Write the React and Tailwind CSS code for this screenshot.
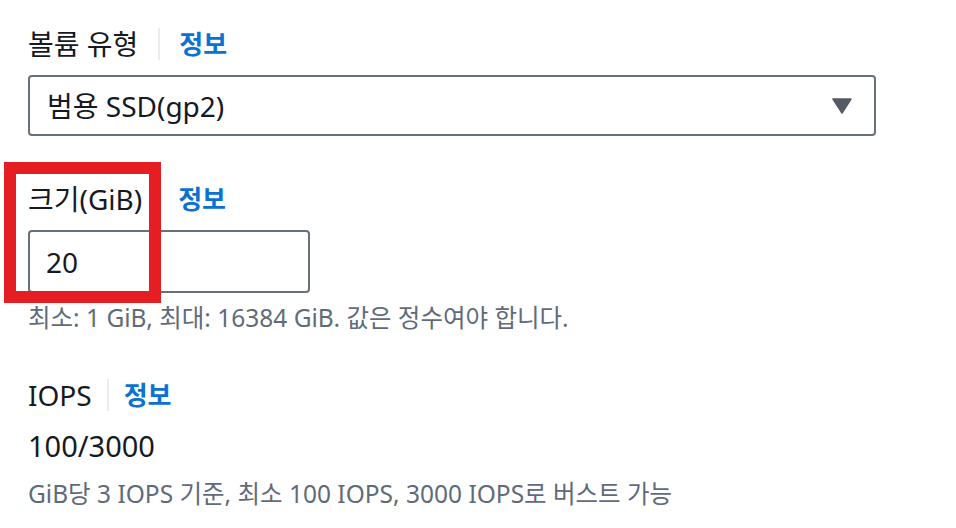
import { Fragment } from 'react'

const FONT = { fontFamily: '"Noto Sans", "Noto Sans CJK KR", sans-serif' }

// Label with an optional divider and the blue info link
function FieldLabel({ text, divider = true, dividerGap = 'ml-[16px]', linkGap = 'ml-[17px]' }) {
  return (
    <div className="flex items-center h-[36px]">
      <span className="text-[28px] leading-none text-[#16191f]">{text}</span>
      {divider
        ? <Fragment>
            <span className={`${dividerGap} w-[2px] h-[32px] bg-[#e9ebed]`} />
            <span className={`${linkGap} text-[26px] leading-none font-bold text-[#0972d3]`}>정보</span>
          </Fragment>
        : <span className={`${linkGap} text-[26px] leading-none font-bold text-[#0972d3]`}>정보</span>}
    </div>
  )
}

export default function App() {
  return (
    <div className="relative w-[956px] h-[528px] bg-white pl-[28px] pt-[26px] overflow-hidden" style={FONT}>
      <FieldLabel text="볼륨 유형" dividerGap="ml-[20px]" linkGap="ml-[19px]" />

      <div className="mt-[13px] w-[848px] h-[61px] border-2 border-[#687078] rounded-[4px] flex items-center pl-[17px] pr-[22px]">
        <span className="flex-1 text-[28px] leading-none text-[#16191f]">범용 SSD(gp2)</span>
        <svg width="20" height="16" viewBox="0 0 20 16">
          <path d="M1 1 H19 L10 15 Z" fill="#545b64" stroke="#545b64" strokeWidth="1.5" strokeLinejoin="round" />
        </svg>
      </div>

      <div className="mt-[45px]">
        <FieldLabel text="크기(GiB)" divider={false} linkGap="ml-[36px]" />
      </div>

      <div className="mt-[13px] w-[282px] h-[63px] border-2 border-[#687078] rounded-[4px] flex items-center pl-[16px]">
        <span className="text-[28px] leading-none text-[#16191f]">20</span>
      </div>

      <div className="mt-[10px] h-[30px] flex items-center text-[24.5px] text-[#5f6b7a]">
        최소: 1 GiB, 최대: 16384 GiB. 값은 정수여야 합니다.
      </div>

      <div className="mt-[44px]">
        <FieldLabel text="IOPS" dividerGap="ml-[15px]" linkGap="ml-[15px]" />
      </div>

      <div className="mt-[15px] h-[36px] flex items-center text-[29px] text-[#16191f]">100/3000</div>

      <div className="mt-[15px] h-[30px] flex items-center text-[24.5px] text-[#5f6b7a]">
        GiB당 3 IOPS 기준, 최소 100 IOPS, 3000 IOPS로 버스트 가능
      </div>

      {/* highlight box drawn over the size field */}
      <div className="absolute left-[4px] top-[162px] w-[157px] h-[141px] border-[12px] border-[#e41e22]" />
    </div>
  )
}
